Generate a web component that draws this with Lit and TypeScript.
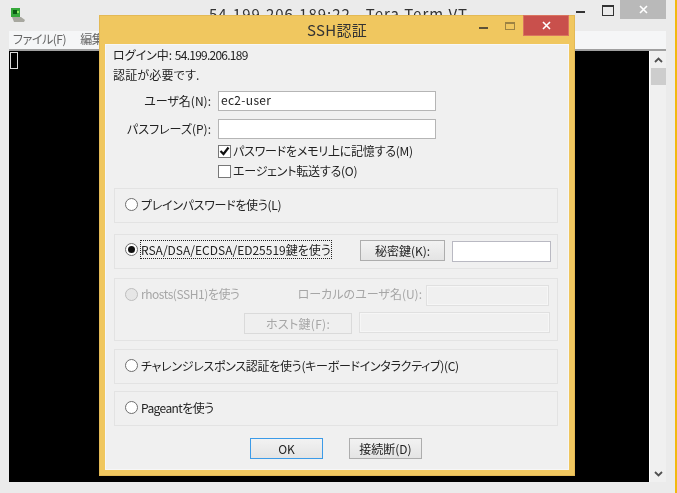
import { LitElement, html, css } from "lit";
import { customElement } from "lit/decorators.js";

@customElement("app-root")
export class AppRoot extends LitElement {
  static styles = css`
    :host { display: block; width: 677px; height: 493px; position: relative; overflow: hidden; background: #ebebeb;
      font-family: "Noto Sans CJK JP", "Noto Sans", sans-serif; font-size: 12px; color: #222; font-feature-settings: "palt"; filter: blur(0.3px); }
    * { box-sizing: border-box; }
    .main { width: 675px; height: 493px; display: flex; flex-direction: column; }
    .edge { position: absolute; right: 0; top: 0; width: 2px; height: 493px; background: #f2b90f; }
    .tb { height: 31px; position: relative; display: flex; align-items: flex-start; padding-left: 11px; }
    .tb .ico { margin-top: 8px; }
    .tb .title { position: absolute; left: 209px; top: 3px; font-size: 15px; color: #333; letter-spacing: 1px; white-space: nowrap; }
    .ctl { display: flex; margin-left: auto; margin-right: 9px; align-items: flex-start; }
    .btn-min { width: 27px; height: 19px; position: relative; }
    .btn-min::after { content: ""; position: absolute; left: 10px; top: 11px; width: 9px; height: 2px; background: #333; }
    .btn-max { width: 27px; height: 19px; position: relative; }
    .btn-max::after { content: ""; position: absolute; left: 9px; top: 5px; width: 10px; height: 8px; border: 1px solid #333; border-top-width: 2px; }
    .btn-x { width: 46px; height: 19px; background: #b9b9b9; display: flex; align-items: center; justify-content: center; }
    .menu { margin-left: 9px; width: 657px; height: 18px; background: #f5f6f7; color: #666; padding-left: 4px; display: flex; gap: 14px; line-height: 16px; letter-spacing: -0.45px; }
    .rule { margin-left: 9px; width: 657px; height: 2px; background: #a0a0a0; }
    .body { margin-left: 9px; width: 657px; height: 431px; display: flex; }
    .term { width: 640px; background: #000; padding: 1px 0 0 1px; }
    .cursor { width: 8px; height: 17px; border: 1px solid #ddd; }
    .sb { width: 17px; background: #f0f0f0; display: flex; flex-direction: column; align-items: center; border-left: 1px solid #fff; }
    .sb .arr { height: 17px; display: flex; align-items: center; justify-content: center; flex: none; }
    .sb .thumb { width: 15px; height: 17px; background: #cdcdcd; flex: none; }
    .sb .fill { flex: 1; }

    .dlg { position: absolute; left: 99px; top: 15px; width: 476px; height: 461px; background: #f0c75f; border: 1px solid #e3b955; display: flex; flex-direction: column; }
    .dtb { height: 28px; position: relative; flex: none; text-align: center; font-size: 15px; line-height: 28px; color: #333; letter-spacing: 0.3px; }
    .dmin { position: absolute; left: 379px; top: 11px; width: 9px; height: 2px; background: #5d5137; }
    .dmax { position: absolute; left: 405px; top: 6px; width: 10px; height: 8px; border: 1px solid #9c8343; border-top-width: 2px; }
    .dx { position: absolute; left: 423px; top: -1px; width: 46px; height: 21px; background: #c9504c; border: 1px solid #d9745f; display: flex; align-items: center; justify-content: center; }
    .client { margin: 0 5px 5px 5px; flex: 1; background: #f0f0f0; border: 1px solid #f7f7f7; padding: 1px 10px 0 8px; }
    .line { height: 20px; line-height: 18px; margin-left: -1px; white-space: nowrap; }
    .nums { letter-spacing: -0.75px; }
    .wide-t { letter-spacing: 0.2px; }
    .row { display: flex; align-items: center; height: 20px; }
    .row.first { margin-top: 5px; }
    .row.second { margin-top: 8px; }
    .lab { width: 97px; text-align: right; white-space: nowrap; margin-bottom: 2px; }
    .in { background: #fff; border: 1px solid #b5b5b5; height: 20px; }
    .in.wide { width: 218px; margin-left: 7px; padding-left: 2px; line-height: 16px; letter-spacing: 0.3px; }
    .ck { height: 20px; margin-left: 104px; display: flex; align-items: center; gap: 2px; white-space: nowrap; }
    .ck.a { margin-top: 2px; }
    .ck > span { margin-bottom: 2px; letter-spacing: -0.22px; }
    .box { width: 13px; height: 13px; border: 1px solid #777; background: #fff; flex: none; display: flex; align-items: center; justify-content: center; }
    .grp { border: 1px solid #e3e3e3; height: 35px; padding: 0 6px 0 10px; display: flex; align-items: center; white-space: nowrap; }
    .grp > span { margin-bottom: 2px; letter-spacing: -0.29px; }
    .g1 { margin-top: 7px; }
    .g2 { margin-top: 11px; padding-bottom: 2px; }
    .g3 { margin-top: 9px; height: 63px; display: block; padding: 0; color: #a6a6a6; }
    .g4 { margin-top: 8px; }
    .g5 { margin-top: 7px; }
    .grp > span.pg { letter-spacing: -0.6px; }
    .r3 { display: flex; align-items: center; padding: 6px 8px 0 10px; height: 27px; }
    .r3 > span { margin-bottom: 4px; }
    .r3 > span.rh { letter-spacing: -0.45px; }
    .r3 > .rad { margin-bottom: 3px; }
    .r3 .far { margin-left: auto; }
    .r3b { display: flex; justify-content: flex-end; align-items: center; padding: 5px 7px 0 0; gap: 7px; }
    .rad { width: 13px; height: 13px; border-radius: 50%; border: 1px solid #6f6f6f; background: #fff; flex: none; margin-right: 3px; margin-bottom: 2px; display: flex; align-items: center; justify-content: center; }
    .rad.on::after { content: ""; width: 7px; height: 7px; border-radius: 50%; background: #111; }
    .rad.off { border-color: #bdbdbd; background: #e6e6e6; }
    .grp > span.focus { outline: 1px dotted #222; line-height: 17px; letter-spacing: 0; }
    .b { background: linear-gradient(#f2f2f2, #e4e4e4); border: 1px solid #adadad; height: 21px; display: flex; align-items: center; justify-content: center; flex: none; }
    .b.key { width: 85px; margin-left: auto; margin-right: 7px; }
    .in.key { width: 99px; height: 21px; border-color: #b9b9c2; margin-top: 2px; }
    .b.dis { background: #efefef; border-color: #dadada; color: #a6a6a6; width: 108px; margin-top: 2px; letter-spacing: 0.3px; }
    .in.dis { background: #f0f0f0; border: 1px solid #e0e0e0; box-shadow: inset 0 0 0 1px #f6f6f6; height: 21px; }
    .in.d1 { width: 123px; margin-left: 4px; }
    .in.d2 { width: 191px; }
    .acts { display: flex; margin-top: 12px; padding-left: 136px; gap: 26px; }
    .acts .b { width: 73px; }
    .acts .ok { border-color: #3c9be8; }
  `;

  render() {
    const cross = (c: string) => html`<svg width="9" height="9" viewBox="0 0 9 9"><path d="M1 1l7 7M8 1l-7 7" stroke=${c} stroke-width="1.6" fill="none"/></svg>`;
    return html`
      <div class="main">
        <div class="tb">
          <svg class="ico" width="14" height="14" viewBox="0 0 14 14">
            <rect x="0" y="0" width="9" height="9" fill="#35a83a"/>
            <rect x="2" y="2" width="4" height="4" fill="#0a5a14"/>
            <rect x="6" y="3" width="2" height="2" fill="#8fe860"/>
            <path d="M1 9h9l4 3-1 2H3z" fill="#a8a8a0"/>
          </svg>
          <div class="title">54.199.206.189:22 - Tera Term VT</div>
          <div class="ctl">
            <div class="btn-min"></div><div class="btn-max"></div>
            <div class="btn-x">${cross("#fff")}</div>
          </div>
        </div>
        <div class="menu"><span>ファイル(F)</span><span>編集(E)</span></div>
        <div class="rule"></div>
        <div class="body">
          <div class="term"><div class="cursor"></div></div>
          <div class="sb">
            <div class="arr"><svg width="9" height="6" viewBox="0 0 9 6"><path d="M1 5l3.5-3.5L8 5" stroke="#505050" stroke-width="1.8" fill="none"/></svg></div>
            <div class="thumb"></div>
            <div class="fill"></div>
            <div class="arr"><svg width="9" height="6" viewBox="0 0 9 6"><path d="M1 1l3.5 3.5L8 1" stroke="#505050" stroke-width="1.8" fill="none"/></svg></div>
          </div>
        </div>
      </div>
      <div class="edge"></div>

      <div class="dlg">
        <div class="dtb">SSH認証
          <div class="dmin"></div><div class="dmax"></div>
          <div class="dx">${cross("#fff")}</div>
        </div>
        <div class="client">
          <div class="line">ログイン中: <span class="nums">54.199.206.189</span></div>
          <div class="line"><span class="wide-t">認証が必要です.</span></div>
          <div class="row first"><div class="lab">ユーザ名(N):</div><div class="in wide">ec2-user</div></div>
          <div class="row second"><div class="lab">パスフレーズ(P):</div><div class="in wide"></div></div>
          <div class="ck a"><div class="box"><svg width="11" height="10" viewBox="0 0 11 10"><path d="M1.5 5l3 3L9.5 1.5" stroke="#111" stroke-width="2.2" fill="none"/></svg></div><span>パスワードをメモリ上に記憶する(M)</span></div>
          <div class="ck"><div class="box"></div><span>エージェント転送する(O)</span></div>
          <div class="grp g1"><div class="rad"></div><span>プレインパスワードを使う(L)</span></div>
          <div class="grp g2"><div class="rad on"></div><span class="focus">RSA/DSA/ECDSA/ED25519鍵を使う</span><div class="b key">秘密鍵(K):</div><div class="in key"></div></div>
          <div class="grp g3">
            <div class="r3"><div class="rad off"></div><span class="rh">rhosts(SSH1)を使う</span><span class="far">ローカルのユーザ名(U):</span><div class="in dis d1"></div></div>
            <div class="r3b"><div class="b dis">ホスト鍵(F):</div><div class="in dis d2"></div></div>
          </div>
          <div class="grp g4"><div class="rad"></div><span>チャレンジレスポンス認証を使う(キーボードインタラクティブ)(C)</span></div>
          <div class="grp g5"><div class="rad"></div><span class="pg">Pageantを使う</span></div>
          <div class="acts"><div class="b ok">OK</div><div class="b">接続断(D)</div></div>
        </div>
      </div>
    `;
  }
}
